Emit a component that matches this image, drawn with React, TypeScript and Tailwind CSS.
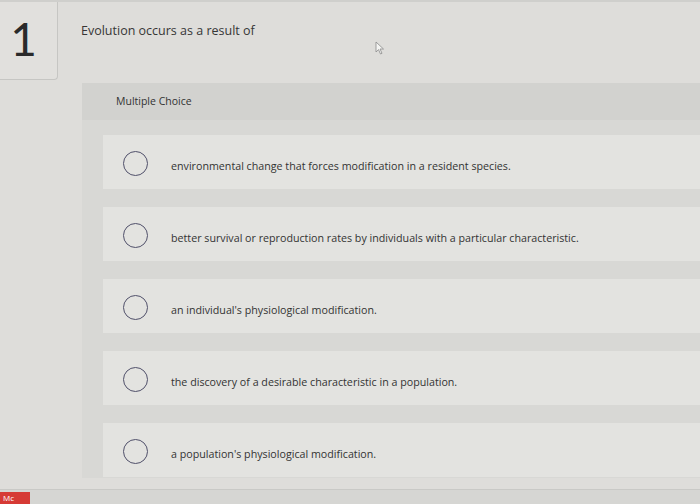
const options = [
  'environmental change that forces modification in a resident species.',
  'better survival or reproduction rates by individuals with a particular characteristic.',
  "an individual's physiological modification.",
  'the discovery of a desirable characteristic in a population.',
  "a population's physiological modification.",
];

export default function App() {
  return (
    <div
      className="relative w-[700px] h-[504px] overflow-hidden bg-[#dedddA] flex flex-col text-[#353535]"
      style={{ fontFamily: '"Open Sans", Lato, sans-serif' }}
    >
      <div className="h-[2px] bg-[#cfcfcc]" />

      {/* question number + prompt */}
      <div className="flex">
        <div className="w-[58px] h-[78px] border border-l-0 border-t-0 border-[#c6c6c3] rounded-br-[4px] bg-[#e1e0dd] flex items-center justify-center">
          <span className="text-[46px] leading-none font-normal text-[#2a2a2a] pr-[10px] pb-[4px]" style={{ fontFamily: 'Lato, sans-serif' }}>1</span>
        </div>
        <p className="ml-[23px] pt-[20px] text-[12.5px] text-[#363636]">Evolution occurs as a result of</p>
      </div>

      {/* header */}
      <div className="ml-[82px] mt-[3px] h-[37px] bg-[#d2d2cf] flex items-center pl-[34px]">
        <span className="text-[10.5px] text-[#333]">Multiple Choice</span>
      </div>

      {/* answers */}
      <div className="ml-[82px] bg-[#d8d8d5] pl-[21px] pt-[15px] pb-[1px] flex flex-col gap-[18px]">
        {options.map((text) => (
          <div key={text} className="h-[54px] bg-[#e3e3e0] flex items-center">
            <span className="ml-[20px] mt-[3px] w-[25px] h-[25px] shrink-0 rounded-full border-[1.5px] border-[#50506a]" />
            <span className="ml-[23px] pt-[9px] text-[10.7px] text-[#333]">{text}</span>
          </div>
        ))}
      </div>

      <div className="mt-auto border-t border-[#c9c9c6] h-[15px] bg-[#d6d6d3] flex items-end">
        <span className="w-[30px] h-[12px] bg-[#d63a35] text-white text-[8px] leading-[12px] pl-[3px]">Mc</span>
      </div>

      {/* cursor */}
      <svg className="absolute left-[375px] top-[41px]" width="10" height="14" viewBox="0 0 10 14">
        <path d="M1 1 L1 11 L3.5 8.6 L5.5 13 L7 12.3 L5 8 L8.5 8 Z" fill="#f4f4f2" stroke="#8a8a8a" strokeWidth="0.8" />
      </svg>
    </div>
  );
}
